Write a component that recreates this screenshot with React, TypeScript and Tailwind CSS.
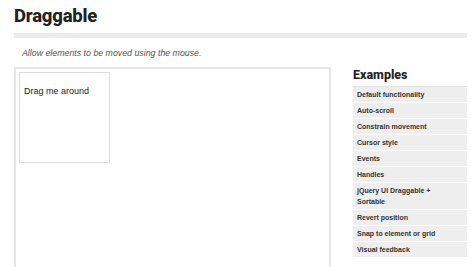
import React from "react";

const items: string[][] = [
  ["Default functionality"],
  ["Auto-scroll"],
  ["Constrain movement"],
  ["Cursor style"],
  ["Events"],
  ["Handles"],
  ["jQuery UI Draggable +", "Sortable"],
  ["Revert position"],
  ["Snap to element or grid"],
  ["Visual feedback"],
];

export default function App() {
  return (
    <div className="w-[474px] h-[267px] overflow-hidden bg-white" style={{ fontFamily: "'Liberation Sans', Arial, sans-serif" }}>
      <div className="pl-[14px] pr-[7px]">
        <h1
          className="text-[18.5px] leading-[24px] font-extrabold text-[#222] pt-[4px] h-[33px] tracking-[-0.2px]"
          style={{ fontFamily: "Roboto, sans-serif" }}
        >
          Draggable
        </h1>
        <div className="h-[5px] bg-[#ebebeb]" />
        <div className="flex">
          <div className="w-[317px] shrink-0">
            <p className="pl-[8px] pt-[9px] h-[29px] text-[8.8px] italic text-[#555]">
              Allow elements to be moved using the mouse.
            </p>
            <div className="border-2 border-[#e6e6e6] border-b-0 h-[200px] p-[3px]">
              <div className="w-[91px] h-[91px] border border-[#ddd] pl-[4px] pt-[12px] text-[9px] leading-[12px] text-[#222]">
                Drag me around
              </div>
            </div>
          </div>
          <div className="ml-[22px] flex-1 pt-[29px]">
            <h2
              className="text-[12.5px] font-extrabold text-[#222] leading-[16px] pb-[3px] border-b border-[#e4e4e4]"
              style={{ fontFamily: "Roboto, sans-serif" }}
            >
              Examples
            </h2>
            <ul className="bg-[#eeeeee]">
              {items.map((it, i) => (
                <li key={i} className="border-b border-white px-[4px] py-[2px] text-[7px] leading-[11px] font-bold text-[#333]">
                  {it.map((l, j) => (
                    <div key={j}>{l}</div>
                  ))}
                </li>
              ))}
            </ul>
          </div>
        </div>
      </div>
    </div>
  );
}
